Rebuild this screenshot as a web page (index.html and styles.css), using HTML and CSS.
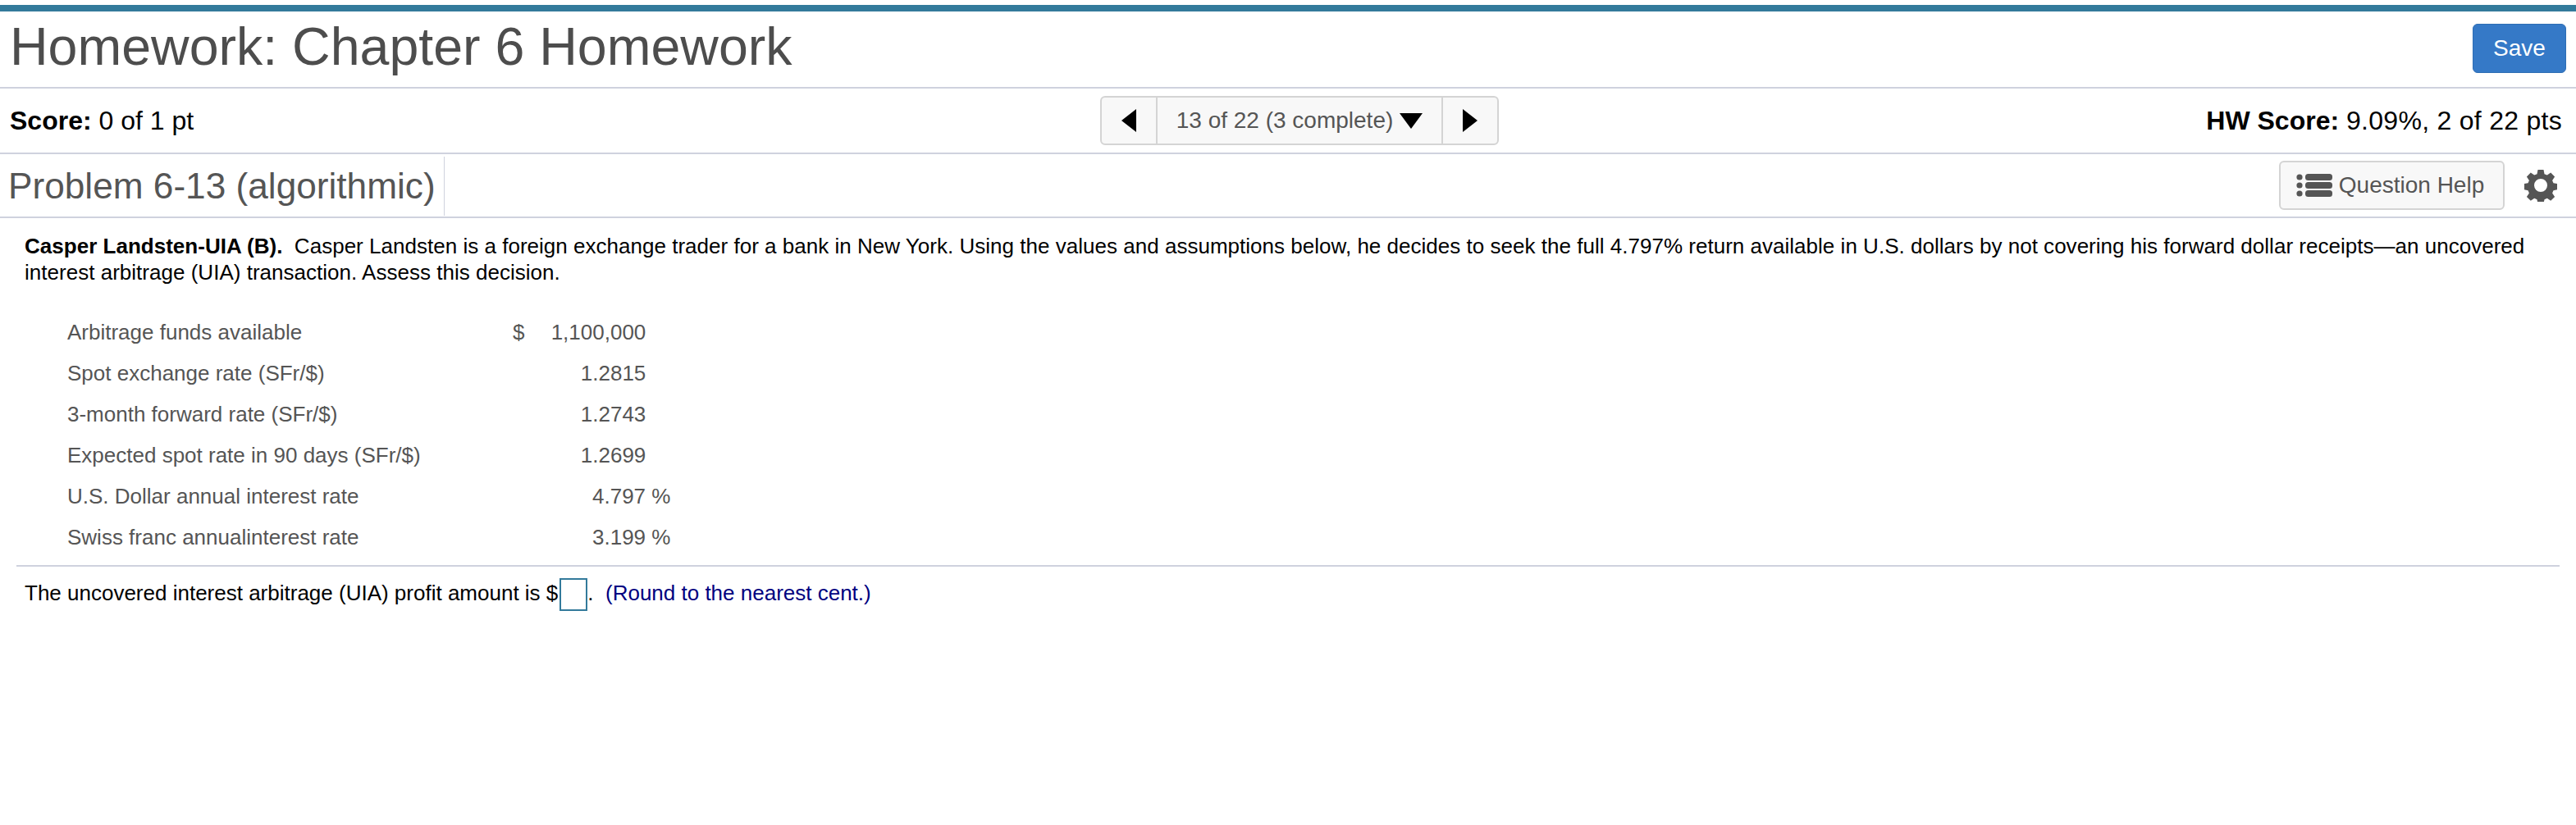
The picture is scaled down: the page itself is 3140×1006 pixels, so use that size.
FILE: index.html
```html
<!DOCTYPE html>
<html lang="en">
<head>
<meta charset="utf-8">
<title>Homework: Chapter 6 Homework</title>
<link rel="stylesheet" href="styles.css">
</head>
<body>
<div class="topbar"></div>
<header class="row title-row">
  <h1 class="title">Homework: Chapter 6 Homework</h1>
  <button class="save">Save</button>
</header>
<section class="row score-row">
  <div class="score"><b>Score:</b> 0 of 1 pt</div>
  <div class="pager">
    <span class="pager-btn"><svg width="22" height="30" viewBox="0 0 22 30"><path d="M20 1V29L2 15Z" fill="#000"/></svg></span>
    <span class="pager-label">13 of 22 (3 complete)<svg class="caret" width="28" height="20" viewBox="0 0 28 20"><path d="M0 1H28L14 20Z" fill="#000"/></svg></span>
    <span class="pager-btn"><svg width="22" height="30" viewBox="0 0 22 30"><path d="M2 1V29L20 15Z" fill="#000"/></svg></span>
  </div>
  <div class="hw-score"><b>HW Score:</b> <span class="hw-value">9.09%, 2 of 22 pts</span></div>
</section>
<section class="row problem-row">
  <h2 class="problem">Problem 6-13 (algorithmic)</h2>
  <div class="tools">
    <button class="help">
      <svg width="44" height="28" viewBox="0 0 44 28"><g fill="#555"><circle cx="4" cy="4" r="3.6"/><circle cx="4" cy="14" r="3.6"/><circle cx="4" cy="24" r="3.6"/><rect x="11" y="0" width="33" height="8" rx="3.5"/><rect x="11" y="10" width="33" height="8" rx="3.5"/><rect x="11" y="20" width="33" height="8" rx="3.5"/></g></svg>
      Question Help
    </button>
    <svg class="gear" width="40" height="40" viewBox="0 0 40 40"><path fill="#555" fill-rule="evenodd" d="M16.5 1h7l1 5.2 3.3 1.4 4.4-3 4.9 4.9-3 4.4 1.4 3.3 5.2 1v7l-5.2 1-1.4 3.3 3 4.4-4.9 4.9-4.4-3-3.3 1.4-1 5.2h-7l-1-5.2-3.3-1.4-4.4 3-4.9-4.9 3-4.4-1.4-3.3-5.2-1v-7l5.2-1 1.4-3.3-3-4.4 4.9-4.9 4.4 3 3.3-1.4zM20 12a8 8 0 1 0 0 16 8 8 0 0 0 0-16z"/></svg>
  </div>
</section>
<main class="content">
  <p class="intro"><b>Casper Landsten-UIA (B).</b>&nbsp; Casper Landsten is a foreign exchange trader for a bank in New York. Using the values and assumptions below, he decides to seek the full 4.797% return available in U.S. dollars by not covering his forward dollar receipts—an uncovered interest arbitrage (UIA) transaction. Assess this decision.</p>
  <table class="data">
    <tr><td class="label">Arbitrage funds available</td><td class="cur">$</td><td class="num">1,100,000</td><td class="unit"></td></tr>
    <tr><td class="label">Spot exchange rate (SFr/$)</td><td class="cur"></td><td class="num">1.2815</td><td class="unit"></td></tr>
    <tr><td class="label">3-month forward rate (SFr/$)</td><td class="cur"></td><td class="num">1.2743</td><td class="unit"></td></tr>
    <tr><td class="label">Expected spot rate in 90 days (SFr/$)</td><td class="cur"></td><td class="num">1.2699</td><td class="unit"></td></tr>
    <tr><td class="label">U.S. Dollar annual interest rate</td><td class="cur"></td><td class="num pct" colspan="2">4.797 %</td></tr>
    <tr><td class="label">Swiss franc annualinterest rate</td><td class="cur"></td><td class="num pct" colspan="2">3.199 %</td></tr>
  </table>
  <div class="answer">The uncovered interest arbitrage (UIA) profit amount is $<span class="input"></span>.&nbsp; <span class="hint">(Round to the nearest cent.)</span></div>
</main>
</body>
</html>
```
FILE: styles.css
```css
* { box-sizing: border-box; }
html, body { margin: 0; background: #fff; }
body { padding-top: 6px; font-family: "Liberation Sans", Arial, sans-serif; font-size: 26px; color: #000; }
.topbar { height: 8px; background: #337a9b; }
.row { display: flex; align-items: center; justify-content: space-between; border-bottom: 2px solid #cfd2de; }
.title-row { height: 94px; padding: 0 12px; }
.title { margin: 0 0 6px; font-size: 64.5px; font-weight: 400; color: #4d4d4d; line-height: 1; }
.save { width: 114px; height: 60px; margin-top: -2px; background: #3579c7; color: #fff; border: 1px solid #2e6db4; border-radius: 6px; font: 28px "Liberation Sans", Arial, sans-serif; padding: 0; }
.score-row { height: 80px; padding: 0 17px 0 12px; font-size: 32px; }
.score, .hw-score { flex: 1 1 0; }
.hw-score { text-align: right; }
.hw-value { letter-spacing: .28px; }
.pager { width: 486px; height: 60px; margin-left: 33px; display: flex; align-items: stretch; background: #f8f8f8; border: 2px solid #d4d4d4; border-radius: 6px; color: #555; font-size: 28px; }
.pager-btn { width: 66px; flex: none; display: flex; align-items: center; justify-content: center; }
.pager-label { flex: 1; display: flex; align-items: center; justify-content: center; gap: 8px; border-left: 2px solid #d4d4d4; border-right: 2px solid #d4d4d4; }
.problem-row { height: 78px; padding: 0 23px 0 10px; }
.problem { margin: 2px 0 0; height: 72px; padding-right: 10px; display: flex; align-items: center; border-right: 1px solid #cfd2de; font-size: 44.2px; font-weight: 400; color: #555; }
.tools { display: flex; align-items: center; gap: 24px; }
.help { width: 275px; height: 60px; display: flex; align-items: center; justify-content: center; gap: 8px; padding: 0 4px 0 0; background: #f8f8f8; border: 2px solid #d4d4d4; border-radius: 6px; color: #555; font: 28px "Liberation Sans", Arial, sans-serif; }
.gear { display: block; }
.content { padding: 18px 20px 0 20px; }
.intro { margin: 0 10px; line-height: 32px; letter-spacing: .018px; }
.data { border-collapse: collapse; margin: 32px 0 0 62px; color: #555; }
.data td { padding: 0; height: 50px; white-space: nowrap; }
.label { width: 543px; }
.cur { width: 40px; }
.num { text-align: right; width: 122px; }
.num.pct { text-align: left; padding-left: 57px !important; }
.unit { width: 30px; }
.answer { border-top: 2px solid #cfd2de; margin-top: 9px; padding: 12px 0 0 10px; line-height: 40px; }
.input { display: inline-block; width: 34px; height: 40px; margin-left: 2px; border: 2px solid #337a9b; vertical-align: middle; }
.hint { color: #000080; }
```
